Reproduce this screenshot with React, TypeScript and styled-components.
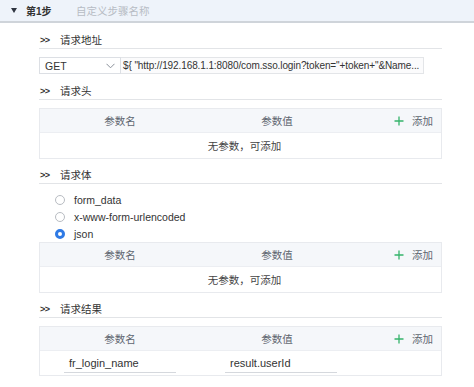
import React from "react";
import styled, { createGlobalStyle } from "styled-components";

const Global = createGlobalStyle`
  html, body { margin: 0; padding: 0; background: #fff; }
  body {
    font-family: "Liberation Sans", "Noto Sans CJK SC", Arial, sans-serif;
    font-size: 10.5px;
    color: #333;
  }
  * { box-sizing: border-box; }
`;

const Page = styled.div`
  width: 474px;
  height: 387px;
  overflow: hidden;
  background: #fff;
`;

const StepBar = styled.div`
  height: 23px;
  display: flex;
  align-items: center;
  padding-left: 11px;
  background: #eef3fa;
  border-bottom: 2px solid #cfd4da;
`;

const Caret = styled.span`
  width: 0;
  height: 0;
  border-left: 3px solid transparent;
  border-right: 3px solid transparent;
  border-top: 5px solid #2f3540;
  margin-right: 9px;
`;

const StepName = styled.span`
  font-weight: bold;
  color: #333;
  width: 50px;
  font-size: 10px;
`;

const StepPlaceholder = styled.span`
  color: #b7bcc4;
`;

const Body = styled.div`
  padding: 8px 32px 0 39px;
  display: flex;
  flex-direction: column;
`;

const SectionTitle = styled.div<{ $gap?: number }>`
  display: flex;
  align-items: center;
  height: 18px;
  margin-top: ${(p) => p.$gap ?? 7}px;
  border-bottom: 1.5px solid #e2e4e7;
  color: #333;
`;

const Arrows = styled.span`
  width: 21px;
  padding-left: 1px;
  font-weight: bold;
  font-size: 9px;
  letter-spacing: -0.5px;
`;

const UrlRow = styled.div`
  display: flex;
  margin-top: 8px;
  height: 17px;
  width: 385px;
`;

const Select = styled.div`
  width: 82px;
  display: flex;
  align-items: center;
  justify-content: space-between;
  padding: 0 5px 0 5px;
  border: 1px solid #dcdfe4;
  background: #fff;
`;

const UrlInput = styled.div`
  flex: 1;
  display: flex;
  align-items: center;
  padding-left: 2px;
  border: 1px solid #e3e5e8;
  border-left: none;
  background: #fbfbfc;
  white-space: nowrap;
  overflow: hidden;
  color: #333;
  font-size: 10px;
  letter-spacing: -0.1px;
`;

const Table = styled.div<{ $gap?: number }>`
  margin-top: ${(p) => p.$gap ?? 8}px;
  border: 1px solid #e8eaee;
  display: grid;
  grid-template-columns: 168px 146px 1fr;
`;

const HeadCell = styled.div<{ $align?: string }>`
  height: 24px;
  background: #f5f7fa;
  display: flex;
  align-items: center;
  justify-content: ${(p) => p.$align ?? "center"};
  color: #5f6670;
  padding-right: 8px;
  border-bottom: 1px solid #eceef2;
`;

const AddBtn = styled.span`
  display: inline-flex;
  align-items: center;
  gap: 8px;
  color: #5f6670;
`;

const EmptyRow = styled.div`
  grid-column: 1 / 4;
  height: 25px;
  display: flex;
  align-items: center;
  justify-content: center;
  padding-left: 8px;
  color: #444;
`;

const Cell = styled.div`
  height: 24px;
  display: flex;
  align-items: center;
  justify-content: center;
`;

const LineInput = styled.div<{ $shift?: number }>`
  width: 112px;
  height: 19px;
  margin-left: ${(p) => p.$shift ?? 0}px;
  display: flex;
  align-items: center;
  padding-left: 5px;
  border-bottom: 1px solid #d5d8dd;
  color: #333;
  font-size: 11px;
`;

const RadioGroup = styled.div`
  margin-top: 7px;
  display: flex;
  flex-direction: column;
  padding-left: 16px;
`;

const RadioRow = styled.label`
  height: 17px;
  display: flex;
  align-items: center;
  gap: 9px;
  color: #333;
`;

const RadioDot = styled.span<{ $on?: boolean }>`
  width: 10px;
  height: 10px;
  border-radius: 50%;
  border: ${(p) => (p.$on ? "3px solid #2f7ae5" : "1px solid #b8bcc2")};
  background: #fff;
`;

const Plus = () => (
  <svg width="10" height="10" viewBox="0 0 10 10">
    <path d="M5 0.5V9.5M0.5 5H9.5" stroke="#35b46b" strokeWidth="1.3" />
  </svg>
);

const Chevron = () => (
  <svg width="9" height="6" viewBox="0 0 9 6">
    <path d="M0.5 0.8L4.5 4.8L8.5 0.8" stroke="#8a9099" strokeWidth="1" fill="none" />
  </svg>
);

const Head = () => (
  <>
    <HeadCell>参数名</HeadCell>
    <HeadCell>参数值</HeadCell>
    <HeadCell $align="flex-end">
      <AddBtn>
        <Plus />
        添加
      </AddBtn>
    </HeadCell>
  </>
);

export default function App() {
  return (
    <Page>
      <Global />
      <StepBar>
        <Caret />
        <StepName>第1步</StepName>
        <StepPlaceholder>自定义步骤名称</StepPlaceholder>
      </StepBar>
      <Body>
        <SectionTitle $gap={0}>
          <Arrows>&gt;&gt;</Arrows>请求地址
        </SectionTitle>
        <UrlRow>
          <Select>
            <span>GET</span>
            <Chevron />
          </Select>
          <UrlInput>{'${ "http://192.168.1.1:8080/com.sso.login?token="+token+"&Name...'}</UrlInput>
        </UrlRow>

        <SectionTitle $gap={8}>
          <Arrows>&gt;&gt;</Arrows>请求头
        </SectionTitle>
        <Table>
          <Head />
          <EmptyRow>无参数，可添加</EmptyRow>
        </Table>

        <SectionTitle>
          <Arrows>&gt;&gt;</Arrows>请求体
        </SectionTitle>
        <RadioGroup>
          <RadioRow>
            <RadioDot />
            form_data
          </RadioRow>
          <RadioRow>
            <RadioDot />
            x-www-form-urlencoded
          </RadioRow>
          <RadioRow>
            <RadioDot $on />
            json
          </RadioRow>
        </RadioGroup>
        <Table $gap={0}>
          <Head />
          <EmptyRow>无参数，可添加</EmptyRow>
        </Table>

        <SectionTitle>
          <Arrows>&gt;&gt;</Arrows>请求结果
        </SectionTitle>
        <Table>
          <Head />
          <Cell>
            <LineInput $shift={-8}>fr_login_name</LineInput>
          </Cell>
          <Cell>
            <LineInput>result.userId</LineInput>
          </Cell>
          <Cell />
        </Table>
      </Body>
    </Page>
  );
}
